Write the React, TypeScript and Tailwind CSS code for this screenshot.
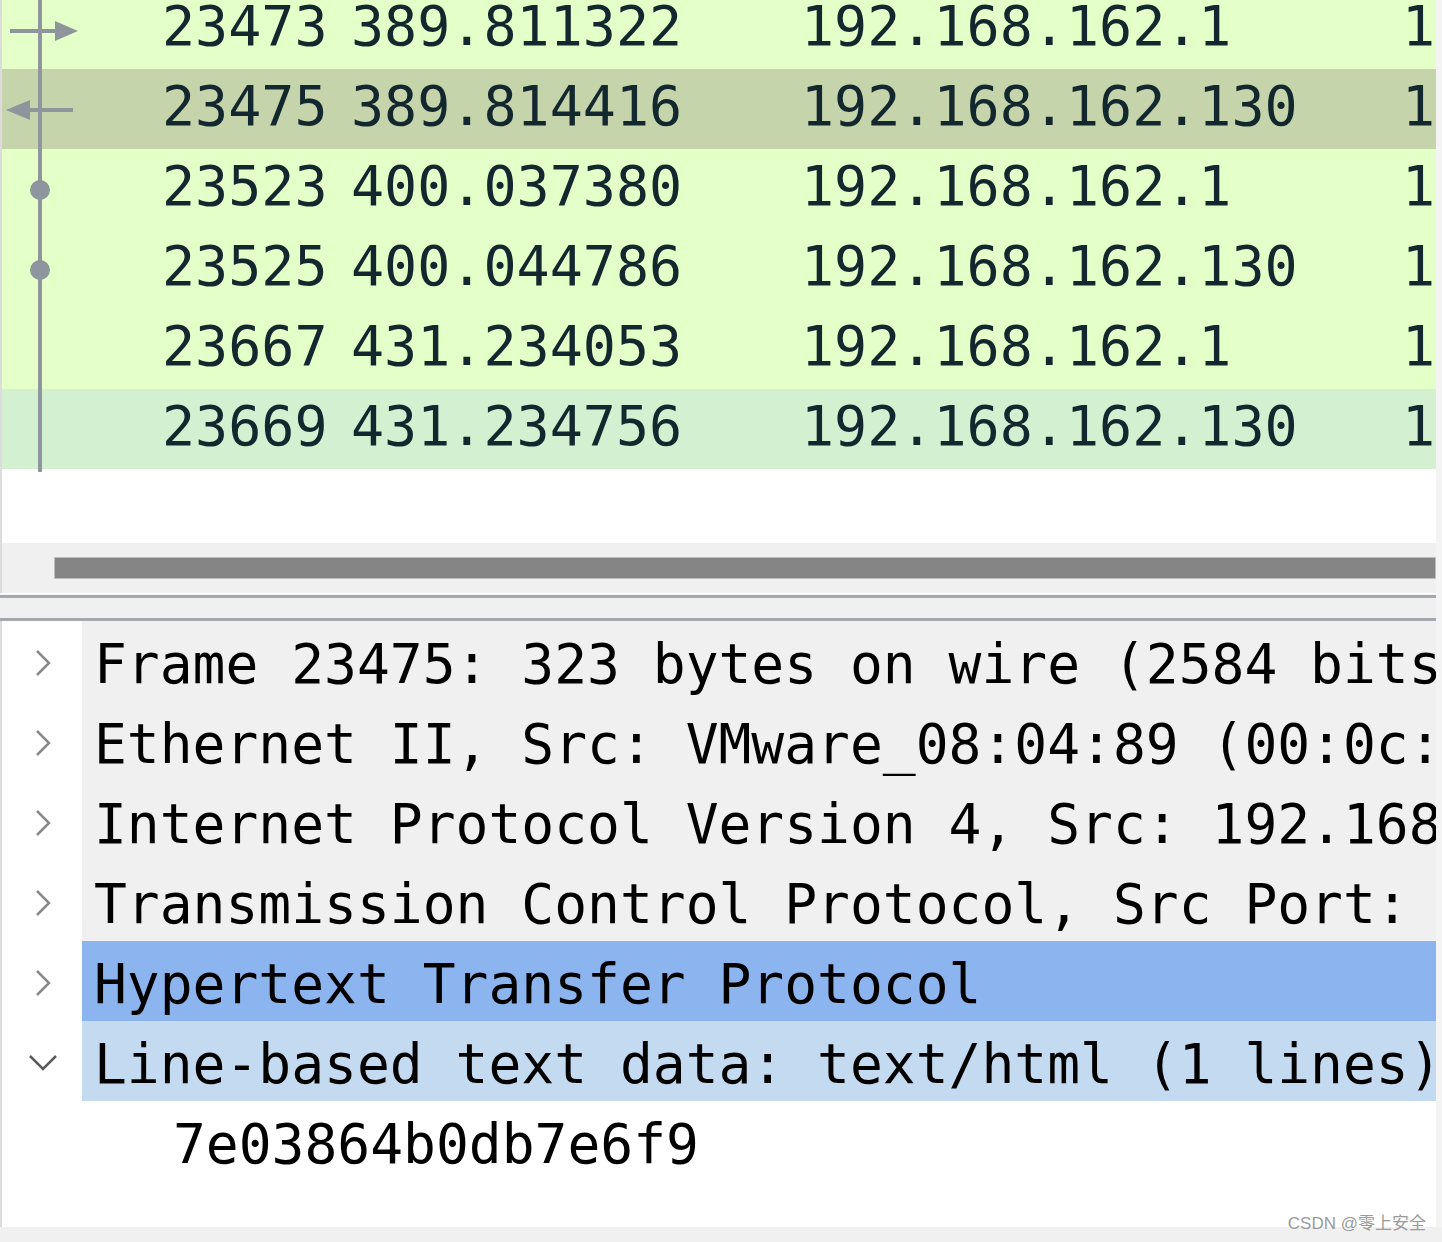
import React from 'react';

const mono = { fontFamily: '"DejaVu Sans Mono", monospace' };

const packets = [
  { no: '23473', time: '389.811322', src: '192.168.162.1', dst: '192.168.162.130', bg: 'bg-[#e4ffc7]' },
  { no: '23475', time: '389.814416', src: '192.168.162.130', dst: '192.168.162.1', bg: 'bg-[#c5d4ab]' },
  { no: '23523', time: '400.037380', src: '192.168.162.1', dst: '192.168.162.130', bg: 'bg-[#e4ffc7]' },
  { no: '23525', time: '400.044786', src: '192.168.162.130', dst: '192.168.162.1', bg: 'bg-[#e4ffc7]' },
  { no: '23667', time: '431.234053', src: '192.168.162.1', dst: '192.168.162.130', bg: 'bg-[#e4ffc7]' },
  { no: '23669', time: '431.234756', src: '192.168.162.130', dst: '192.168.162.1', bg: 'bg-[#d3f0d0]' },
];

const details = [
  { text: 'Frame 23475: 323 bytes on wire (2584 bits), 323 bytes captured (2584 bits) on interface 0', bg: 'bg-[#f0f0f0]', open: false },
  { text: 'Ethernet II, Src: VMware_08:04:89 (00:0c:29:08:04:89), Dst: VMware_c0:00:08 (00:50:56:c0:00:08)', bg: 'bg-[#f0f0f0]', open: false },
  { text: 'Internet Protocol Version 4, Src: 192.168.162.130, Dst: 192.168.162.1', bg: 'bg-[#f0f0f0]', open: false },
  { text: 'Transmission Control Protocol, Src Port: 80, Dst Port: 53112, Seq: 1, Ack: 1', bg: 'bg-[#f0f0f0]', open: false },
  { text: 'Hypertext Transfer Protocol', bg: 'bg-[#8cb5f0]', open: false },
  { text: 'Line-based text data: text/html (1 lines)', bg: 'bg-[#c4daf1]', open: true },
];

function Chevron({ open }: { open: boolean }) {
  return open ? (
    <svg width="30" height="20" viewBox="0 0 30 20" fill="none" stroke="#5a5a5a" strokeWidth="2.5">
      <polyline points="2,3 15,16 28,3" />
    </svg>
  ) : (
    <svg width="18" height="28" viewBox="0 0 18 28" fill="none" stroke="#8a8a8a" strokeWidth="2.5">
      <polyline points="3,2 15,14 3,26" />
    </svg>
  );
}

export default function App() {
  return (
    <div className="w-[1442px] h-[1242px] bg-[#f4f4f4] flex flex-col overflow-hidden relative" style={mono}>
      {/* Packet list */}
      <div className="h-[543px] w-[1436px] bg-white border-l-2 border-[#dcdcdc] relative overflow-hidden">
        <div className="-mt-[11px] flex flex-col">
          {packets.map((p) => (
            <div key={p.no} className={`h-[80px] flex text-[55px] leading-[74px] text-[#12272e] whitespace-nowrap ${p.bg}`}>
              <div className="w-[160px] shrink-0" />
              <div className="w-[189px] shrink-0">{p.no}</div>
              <div className="w-[450px] shrink-0">{p.time}</div>
              <div className="w-[601px] shrink-0">{p.src}</div>
              <div className="flex-1 overflow-hidden">{p.dst}</div>
            </div>
          ))}
        </div>
        {/* related packets indicator */}
        <svg className="absolute -left-[2px] top-0" width="100" height="480" viewBox="0 0 100 480">
          <line x1="40" y1="0" x2="40" y2="472" stroke="#8f959c" strokeWidth="4" />
          <line x1="10" y1="31" x2="58" y2="31" stroke="#8f959c" strokeWidth="4" />
          <polygon points="55,21 78,31 55,41" fill="#8f959c" />
          <polygon points="6,110 30,100 30,120" fill="#8f959c" />
          <line x1="28" y1="110" x2="73" y2="110" stroke="#8f959c" strokeWidth="4" />
          <circle cx="40" cy="190" r="10" fill="#8f959c" />
          <circle cx="40" cy="270" r="10" fill="#8f959c" />
        </svg>
      </div>

      {/* Horizontal scrollbar */}
      <div className="h-[50px] w-[1436px] bg-[#f0f0f0] border-l-2 border-[#dcdcdc] flex items-start pt-[14px] pl-[52px]">
        <div className="h-[22px] flex-1 bg-[#858585] border border-[#bdbdbd]" />
      </div>

      {/* Splitter */}
      <div className="w-[1436px] h-[1px] bg-white" />
      <div className="w-[1436px] h-[3px] bg-[#a3a8ae] mt-[1px]" />
      <div className="w-[1436px] h-[20px] bg-[#f0f0f0]" />
      <div className="w-[1436px] h-[3px] bg-[#a3a8ae]" />

      {/* Packet details */}
      <div className="w-[1436px] h-[606px] bg-white border-l-2 border-[#dcdcdc] flex flex-col overflow-hidden">
        {details.map((d) => (
          <div key={d.text} className="h-[80px] flex shrink-0">
            <div className="w-[80px] shrink-0 bg-white flex items-center justify-center pl-[1px] pt-[3px]">
              <Chevron open={d.open} />
            </div>
            <div className={`flex-1 overflow-hidden whitespace-nowrap text-[54.6px] leading-[86px] text-black pl-[12px] ${d.bg}`}>
              {d.text}
            </div>
          </div>
        ))}
        <div className="h-[80px] shrink-0 text-[54.6px] leading-[86px] text-black pl-[171px] whitespace-nowrap">
          7e03864b0db7e6f9
        </div>
      </div>

      {/* bottom strip */}
      <div className="flex-1 w-full bg-[#f0f0f0]" />

      <div
        className="absolute right-[16px] bottom-[8px] text-[17px] leading-[20px] text-[#9a9a9a]"
        style={{ fontFamily: '"Liberation Sans", "Noto Sans CJK SC", sans-serif' }}
      >
        CSDN @零上安全
      </div>
    </div>
  );
}
